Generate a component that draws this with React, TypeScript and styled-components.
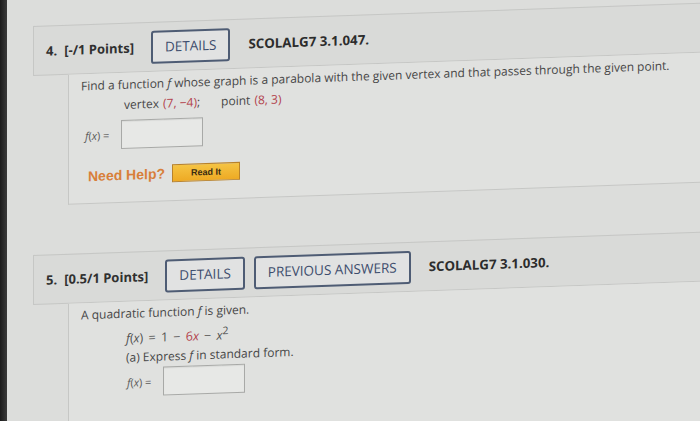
import React from "react";
import styled, { createGlobalStyle } from "styled-components";

const GlobalStyle = createGlobalStyle`
  html, body {
    margin: 0;
    padding: 0;
    background: #dcdddb;
  }
  body {
    width: 700px;
    height: 421px;
    overflow: hidden;
    font-family: "Open Sans", "DejaVu Sans", sans-serif;
  }
`;

const Screen = styled.div`
  display: flex;
  width: 700px;
  height: 421px;
  overflow: hidden;
  background: #dcdddb;
`;

const Bezel = styled.div`
  width: 7px;
  flex-shrink: 0;
  background: linear-gradient(90deg, #1b1b1b, #3b3b3b);
`;

// the photo was taken at a slight angle, so the whole page leans
const Page = styled.div`
  flex: 1;
  min-height: 470px;
  padding: 27px 0 0 26px;
  transform: skewY(-2deg);
  transform-origin: 0 0;
`;

const Question = styled.section<{ $last?: boolean }>`
  margin-bottom: ${(p) => (p.$last ? 0 : 49)}px;
`;

const Header = styled.div`
  display: flex;
  align-items: center;
  box-sizing: border-box;
  height: 50px;
  padding-left: 12px;
  background: #d9dad8;
  border: 1px solid #c6c7c5;
  border-right: none;
  color: #303030;
  font-weight: 700;
  font-size: 13px;
`;

const Num = styled.span`
  margin-right: 7px;
`;

const ButtonRow = styled.div`
  display: flex;
  align-items: center;
  gap: 9px;
  margin-left: 17px;
`;

const OutlineButton = styled.div`
  display: flex;
  align-items: center;
  box-sizing: border-box;
  height: 33px;
  padding: 0 12px;
  border: 2px solid #4e5c74;
  border-radius: 3px;
  background: #e1e2e2;
  color: #3d4d6d;
  font-weight: 400;
  font-size: 13.5px;
`;

const Code = styled.span`
  margin-left: 18px;
  font-size: 13.3px;
  color: #2c2c2c;
`;

const Body = styled.div<{ $open?: boolean }>`
  margin-left: 35px;
  padding: 3px 0 ${(p) => (p.$open ? 60 : 18)}px 12px;
  background: #e0e1df;
  border-left: 1px solid #c6c7c5;
  border-bottom: ${(p) => (p.$open ? "none" : "1px solid #c6c7c5")};
  color: #474747;
  font-size: 12px;
  line-height: 17px;
`;

const Line = styled.div<{ $indent?: number; $gap?: number }>`
  margin-top: ${(p) => p.$gap ?? 0}px;
  padding-left: ${(p) => p.$indent ?? 0}px;
  white-space: nowrap;
`;

const Var = styled.i`
  font-style: italic;
`;

const Given = styled.span`
  color: #b2404a;
`;

const Spacer = styled.span<{ $w: number }>`
  display: inline-block;
  width: ${(p) => p.$w}px;
`;

const Math = styled.span`
  color: #505050;
  font-size: 12.5px;
  word-spacing: 2px;
`;

const AnswerRow = styled.div<{ $indent: number; $gap: number }>`
  display: flex;
  align-items: center;
  margin-top: ${(p) => p.$gap}px;
  padding-left: ${(p) => p.$indent}px;
`;

const AnswerLabel = styled.span`
  width: 30px;
  margin-right: 6px;
  color: #5a5a5a;
  font-size: 11px;
  white-space: nowrap;
`;

const AnswerBox = styled.div`
  box-sizing: border-box;
  width: 82px;
  height: 29px;
  background: #e7e8e6;
  border: 1px solid #a8a9a7;
  box-shadow: inset 0 1px 1px rgba(0, 0, 0, 0.06);
`;

const HelpRow = styled.div`
  display: flex;
  align-items: center;
  gap: 7px;
  margin-top: 17px;
  padding-left: 7px;
`;

const NeedHelp = styled.span`
  font-family: "Liberation Sans", Arial, sans-serif;
  font-weight: 700;
  font-size: 14px;
  color: #d87f3a;
`;

const ReadIt = styled.div`
  display: flex;
  align-items: center;
  justify-content: center;
  box-sizing: border-box;
  width: 68px;
  height: 18px;
  background: linear-gradient(#f5c444, #eeaa24);
  border: 1px solid #b8822b;
  font-family: "Liberation Sans", Arial, sans-serif;
  font-weight: 700;
  font-size: 9px;
  color: #3a2b12;
`;

export default function App() {
  return (
    <Screen>
      <GlobalStyle />
      <Bezel />
      <Page>
        <Question>
          <Header>
            <Num>4.</Num>
            <span>[-/1 Points]</span>
            <ButtonRow>
              <OutlineButton>DETAILS</OutlineButton>
            </ButtonRow>
            <Code>SCOLALG7 3.1.047.</Code>
          </Header>
          <Body>
            <Line>
              Find a function <Var>f</Var> whose graph is a parabola with the
              given vertex and that passes through the given point.
            </Line>
            <Line $indent={43} $gap={3}>
              vertex <Spacer $w={1} />
              <Given>(7, −4)</Given>;<Spacer $w={21} />
              point <Spacer $w={1} />
              <Given>(8, 3)</Given>
            </Line>
            <AnswerRow $indent={4} $gap={7}>
              <AnswerLabel>
                <Var>f</Var>(<Var>x</Var>) =
              </AnswerLabel>
              <AnswerBox />
            </AnswerRow>
            <HelpRow>
              <NeedHelp>Need Help?</NeedHelp>
              <ReadIt>Read It</ReadIt>
            </HelpRow>
          </Body>
        </Question>

        <Question $last>
          <Header>
            <Num>5.</Num>
            <span>[0.5/1 Points]</span>
            <ButtonRow>
              <OutlineButton>DETAILS</OutlineButton>
              <OutlineButton>PREVIOUS ANSWERS</OutlineButton>
            </ButtonRow>
            <Code>SCOLALG7 3.1.030.</Code>
          </Header>
          <Body $open>
            <Line>
              A quadratic function <Var>f</Var> is given.
            </Line>
            <Line $indent={45} $gap={4}>
              <Math>
                <Var>f</Var>(<Var>x</Var>) = 1 − <Given>6<Var>x</Var></Given> −{" "}
                <Var>x</Var>
                <sup>2</sup>
              </Math>
            </Line>
            <Line $indent={45} $gap={2}>
              (a) Express <Var>f</Var> in standard form.
            </Line>
            <AnswerRow $indent={46} $gap={2}>
              <AnswerLabel>
                <Var>f</Var>(<Var>x</Var>) =
              </AnswerLabel>
              <AnswerBox />
            </AnswerRow>
          </Body>
        </Question>
      </Page>
    </Screen>
  );
}
